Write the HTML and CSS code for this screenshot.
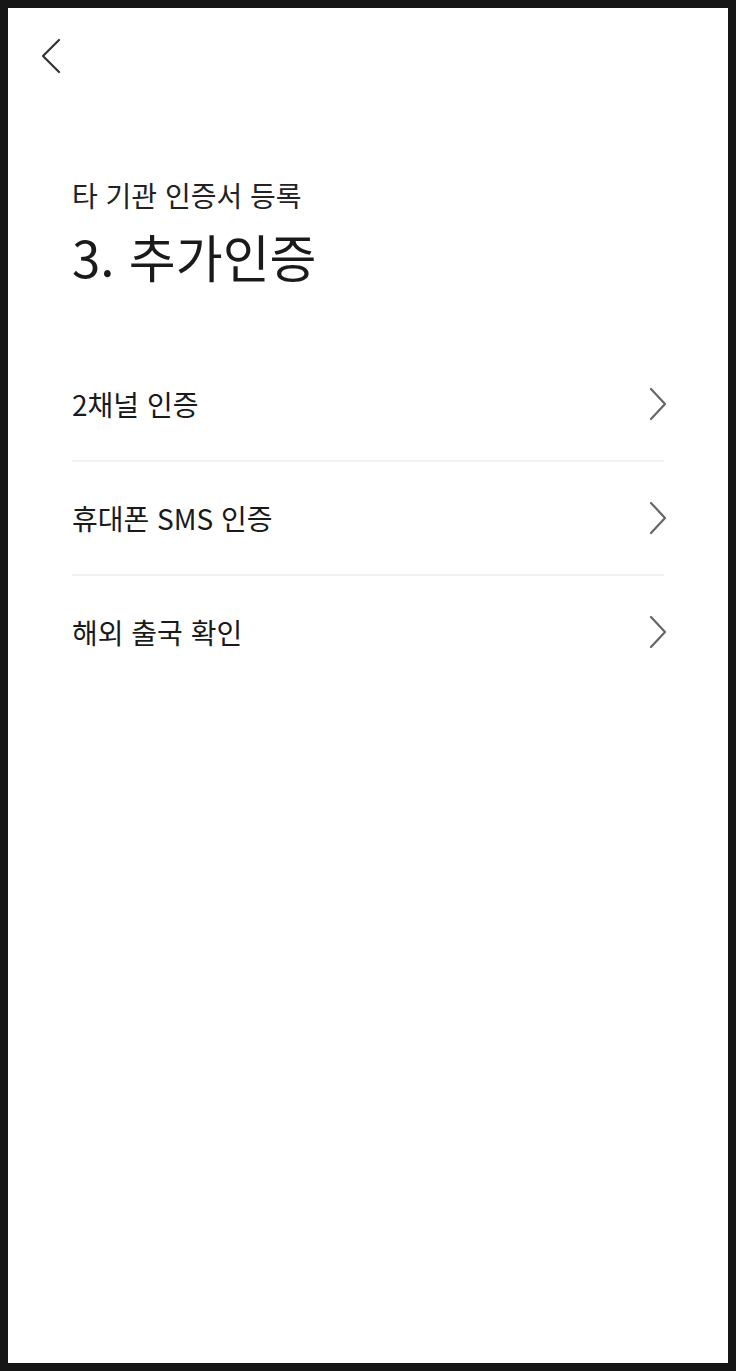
FILE: index.html
```html
<!DOCTYPE html>
<html lang="ko">
<head>
<meta charset="utf-8">
<title>추가인증</title>
<link rel="stylesheet" href="styles.css">
</head>
<body>
<div class="screen">
  <header class="topbar">
    <button class="back" aria-label="뒤로">
      <svg width="22" height="36" viewBox="0 0 22 36"><path d="M19 2 L3 18 L19 34" fill="none" stroke="#333" stroke-width="2.2" stroke-linecap="round" stroke-linejoin="round"/></svg>
    </button>
  </header>
  <section class="heading">
    <p class="subtitle">타 기관 인증서 등록</p>
    <h1 class="title">3. 추가인증</h1>
  </section>
  <ul class="menu">
    <li class="item"><span class="label">2채널 인증</span>
      <svg class="chev" width="20" height="34" viewBox="0 0 20 34"><path d="M3 2 L17 17 L3 32" fill="none" stroke="#666" stroke-width="2.2" stroke-linecap="round" stroke-linejoin="round"/></svg>
    </li>
    <li class="item"><span class="label">휴대폰 SMS 인증</span>
      <svg class="chev" width="20" height="34" viewBox="0 0 20 34"><path d="M3 2 L17 17 L3 32" fill="none" stroke="#666" stroke-width="2.2" stroke-linecap="round" stroke-linejoin="round"/></svg>
    </li>
    <li class="item"><span class="label">해외 출국 확인</span>
      <svg class="chev" width="20" height="34" viewBox="0 0 20 34"><path d="M3 2 L17 17 L3 32" fill="none" stroke="#666" stroke-width="2.2" stroke-linecap="round" stroke-linejoin="round"/></svg>
    </li>
  </ul>
</div>
</body>
</html>
```

FILE: styles.css
```css
html {
  background: #161616;
}
body {
  margin: 8px;
  background: #ffffff;
  font-family: "Noto Sans CJK KR", "Noto Sans", sans-serif;
  color: #1a1a1a;
}
.screen {
  height: 1355px;
  display: flex;
  flex-direction: column;
}
.topbar {
  padding: 30px 0 0 32px;
  height: 40px;
}
.back {
  border: 0;
  background: none;
  padding: 0;
  display: block;
  cursor: pointer;
}
.back svg {
  display: block;
}
.heading {
  padding: 0 64px;
  margin-top: 98px;
}
.subtitle {
  margin: 0;
  font-size: 28px;
  line-height: 38px;
  font-weight: 400;
  color: #222;
}
.title {
  margin: 12px 0 0;
  font-size: 51px;
  line-height: 60px;
  font-weight: 400;
  color: #1a1a1a;
}
.menu {
  list-style: none;
  margin: 62px 0 0;
  padding: 0 64px;
}
.item {
  height: 112px;
  display: flex;
  align-items: center;
  justify-content: space-between;
  border-bottom: 2px solid #f2f2f2;
}
.item:last-child {
  border-bottom: 0;
}
.label {
  font-size: 28px;
  line-height: 38px;
  color: #1a1a1a;
}
.chev {
  display: block;
  margin-right: -4px;
}
```
